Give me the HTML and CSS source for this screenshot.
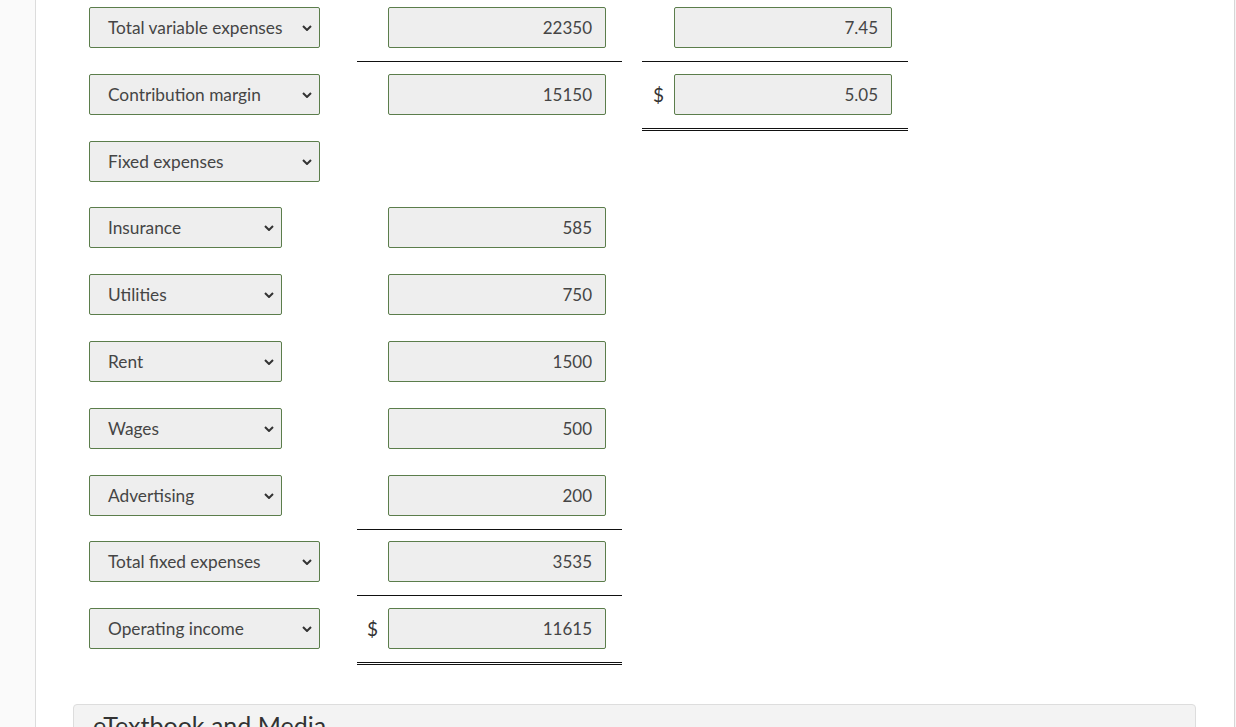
FILE: index.html
```html
<!DOCTYPE html>
<html>
<head>
<meta charset="utf-8">
<link rel="stylesheet" href="styles.css">
</head>
<body>
<div class="page">
  <div class="gutter"></div>
  <main class="main">
    <div class="sheet">
      <div class="row">
        <div class="sel wide"><span>Total variable expenses</span><svg class="chev" viewBox="0 0 10 6"><path d="M1 1l4 4 4-4"/></svg></div>
        <div class="cell line"><span class="cur"></span><div class="box">22350</div></div>
        <div class="cell line"><span class="cur"></span><div class="box">7.45</div></div>
      </div>
      <div class="row">
        <div class="sel wide"><span>Contribution margin</span><svg class="chev" viewBox="0 0 10 6"><path d="M1 1l4 4 4-4"/></svg></div>
        <div class="cell"><span class="cur"></span><div class="box">15150</div></div>
        <div class="cell dbl"><span class="cur">$</span><div class="box">5.05</div></div>
      </div>
      <div class="row">
        <div class="sel wide"><span>Fixed expenses</span><svg class="chev" viewBox="0 0 10 6"><path d="M1 1l4 4 4-4"/></svg></div>
      </div>
      <div class="row">
        <div class="sel narrow"><span>Insurance</span><svg class="chev" viewBox="0 0 10 6"><path d="M1 1l4 4 4-4"/></svg></div>
        <div class="cell"><span class="cur"></span><div class="box">585</div></div>
      </div>
      <div class="row">
        <div class="sel narrow"><span>Utilities</span><svg class="chev" viewBox="0 0 10 6"><path d="M1 1l4 4 4-4"/></svg></div>
        <div class="cell"><span class="cur"></span><div class="box">750</div></div>
      </div>
      <div class="row">
        <div class="sel narrow"><span>Rent</span><svg class="chev" viewBox="0 0 10 6"><path d="M1 1l4 4 4-4"/></svg></div>
        <div class="cell"><span class="cur"></span><div class="box">1500</div></div>
      </div>
      <div class="row">
        <div class="sel narrow"><span>Wages</span><svg class="chev" viewBox="0 0 10 6"><path d="M1 1l4 4 4-4"/></svg></div>
        <div class="cell"><span class="cur"></span><div class="box">500</div></div>
      </div>
      <div class="row">
        <div class="sel narrow"><span>Advertising</span><svg class="chev" viewBox="0 0 10 6"><path d="M1 1l4 4 4-4"/></svg></div>
        <div class="cell line"><span class="cur"></span><div class="box">200</div></div>
      </div>
      <div class="row">
        <div class="sel wide"><span>Total fixed expenses</span><svg class="chev" viewBox="0 0 10 6"><path d="M1 1l4 4 4-4"/></svg></div>
        <div class="cell line"><span class="cur"></span><div class="box">3535</div></div>
      </div>
      <div class="row">
        <div class="sel wide"><span>Operating income</span><svg class="chev" viewBox="0 0 10 6"><path d="M1 1l4 4 4-4"/></svg></div>
        <div class="cell dbl"><span class="cur">$</span><div class="box">11615</div></div>
      </div>
    </div>
    <section class="panel">
      <h2 class="panel-title">eTextbook and Media</h2>
    </section>
  </main>
  <div class="edge"></div>
</div>
</body>
</html>
```
FILE: styles.css
```css
html, body {
  margin: 0;
  padding: 0;
  background: #ffffff;
  font-family: Lato, "Liberation Sans", sans-serif;
  color: #333333;
  overflow: hidden;
}
.page {
  display: flex;
  height: 727px;
}
.gutter {
  width: 35px;
  flex: none;
  background: #fafafa;
  border-right: 1px solid #dcdcdc;
}
.main {
  width: 1198px;
  flex: none;
  border-right: 1px solid #d6d6d6;
  background: #fff;
}
.edge {
  flex: 1;
  background: #f5f5f5;
}
.sheet {
  padding: 7px 0 0 53px;
}
.row {
  display: grid;
  grid-template-columns: 248px 265px 266px;
  column-gap: 20px;
  align-items: start;
  height: 66.8px;
}
.sel {
  box-sizing: border-box;
  height: 41px;
  border: 1px solid #5b7d4b;
  border-radius: 2px;
  background: #eeeeee;
  display: flex;
  align-items: center;
  justify-content: space-between;
  padding: 0 7px 0 18px;
  font-size: 17.3px;
  color: #454545;
}
.sel.wide { width: 231px; }
.sel.narrow { width: 193px; }
.chev {
  width: 10px;
  height: 6px;
  fill: none;
  stroke: #333;
  stroke-width: 2;
  margin-top: 1px;
}
.cell {
  display: flex;
  align-items: center;
  padding: 0 16px 13px 10px;
}
.cell + .cell { padding-left: 11px; }
.cell.line { border-bottom: 1px solid #111; }
.cell.dbl { border-bottom: 3px double #111; }
.cur {
  width: 21px;
  font-size: 19px;
  color: #333;
  flex: none;
}
.box {
  box-sizing: border-box;
  width: 218px;
  height: 41px;
  border: 1px solid #5b7d4b;
  border-radius: 2px;
  background: #eeeeee;
  text-align: right;
  padding: 0 13px;
  line-height: 39px;
  font-size: 17px;
  color: #454545;
}
.panel {
  margin: 29px 38px 0 37px;
  background: #f3f3f3;
  border: 1px solid #dddddd;
  border-radius: 4px;
  padding: 5px 19px;
}
.panel-title {
  margin: 0;
  font-size: 25px;
  font-weight: 400;
  color: #333;
}
```
